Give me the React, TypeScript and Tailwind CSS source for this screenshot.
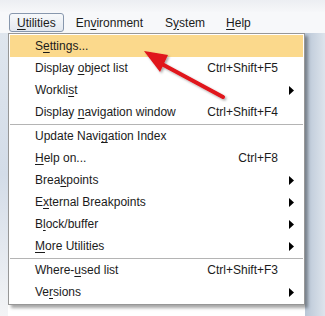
import React from 'react';

interface Item {
  label: string; // '&' marks the mnemonic letter
  shortcut?: string;
  submenu?: boolean;
  active?: boolean;
}

const groups: Item[][] = [
  [
    { label: 'S&ettings...', active: true },
    { label: 'Display &object list', shortcut: 'Ctrl+Shift+F5' },
    { label: 'Workli&st', submenu: true },
    { label: 'Display &navigation window', shortcut: 'Ctrl+Shift+F4' },
  ],
  [
    { label: 'Update Navi&gation Index' },
    { label: '&Help on...', shortcut: 'Ctrl+F8' },
    { label: 'Brea&kpoints', submenu: true },
    { label: 'E&xternal Breakpoints', submenu: true },
    { label: 'B&lock/buffer', submenu: true },
    { label: '&More Utilities', submenu: true },
  ],
  [
    { label: 'Where-&used list', shortcut: 'Ctrl+Shift+F3' },
    { label: 'Ve&rsions', submenu: true },
  ],
];

function Mnemonic({ text }: { text: string }) {
  const i = text.indexOf('&');
  if (i < 0) return <>{text}</>;
  return (
    <>
      {text.slice(0, i)}
      <span className="underline underline-offset-2">{text[i + 1]}</span>
      {text.slice(i + 2)}
    </>
  );
}

function Arrow() {
  return (
    <svg width="5" height="9" viewBox="0 0 5 9" className="absolute right-[9px] top-[7px]">
      <path d="M0 0 L5 4.5 L0 9 Z" fill="#000" />
    </svg>
  );
}

function MenuRow({ item }: { item: Item }) {
  return (
    <div
      className={`relative flex h-[22px] items-center justify-between pl-[25px] pr-[25px] ${
        item.active ? 'bg-[#fbd98c]' : ''
      }`}
    >
      <span>
        <Mnemonic text={item.label} />
      </span>
      {item.shortcut && <span>{item.shortcut}</span>}
      {item.submenu && <Arrow />}
    </div>
  );
}

export default function App() {
  const top = [
    { t: '&Utilities', cls: 'mr-[12px] rounded-[3px] border border-[#8797ad] bg-gradient-to-b from-[#f7f9fb] to-[#e3e8ef] px-[7px]' },
    { t: 'En&vironment', cls: 'mr-[22px]' },
    { t: 'S&ystem', cls: 'mr-[21px]' },
    { t: '&Help', cls: '' },
  ];

  return (
    <div
      className="relative h-[316px] w-[325px] overflow-hidden bg-white text-[12px] text-[#1b1b1b]"
      style={{ fontFamily: '"Liberation Sans", Arial, sans-serif' }}
    >
      <div className="h-[12px] bg-gradient-to-b from-[#eceef2] to-[#f6f7f9]" />
      <div className="flex h-[21px] items-start bg-[#f7f8fa] pl-[9px] pt-px">
        {top.map((m) => (
          <div key={m.t} className={`flex h-[19px] items-center ${m.cls}`}>
            <Mnemonic text={m.t} />
          </div>
        ))}
      </div>

      {/* window content behind the menu */}
      <div className="flex h-[283px]">
        <div className="w-[8px] bg-gradient-to-b from-[#dfe6ee] via-[#d3dce8] to-[#f3f4f6]" />
        <div className="flex-1 bg-white" />
        <div className="w-[20px] bg-gradient-to-r from-[#b9c6d6] to-[#dde4ec]" />
      </div>

      <div className="absolute left-[8px] top-[33px] w-[297px] border border-[#979797] bg-white p-px shadow-[3px_3px_3px_rgba(0,0,0,0.35)]">
        {groups.map((g, gi) => (
          <div key={gi}>
            {gi > 0 && (
              <div className="flex h-[2px] items-center">
                <div className="h-px w-full bg-[#b4b4b4]" />
              </div>
            )}
            {g.map((item) => (
              <MenuRow key={item.label} item={item} />
            ))}
          </div>
        ))}
      </div>

      {/* red callout arrow */}
      <svg className="absolute left-0 top-0" width="325" height="316" viewBox="0 0 325 316">
        <defs>
          <filter id="sh" x="-20%" y="-20%" width="140%" height="140%">
            <feDropShadow dx="1.5" dy="1.5" stdDeviation="1.2" floodColor="#000" floodOpacity="0.35" />
          </filter>
        </defs>
        <g filter="url(#sh)">
          <line x1="223" y1="97" x2="160" y2="63" stroke="#e0131a" strokeWidth="4" strokeLinecap="round" />
          <path d="M144 51 L168 55 L160 72 Z" fill="#e0131a" />
        </g>
      </svg>
    </div>
  );
}
